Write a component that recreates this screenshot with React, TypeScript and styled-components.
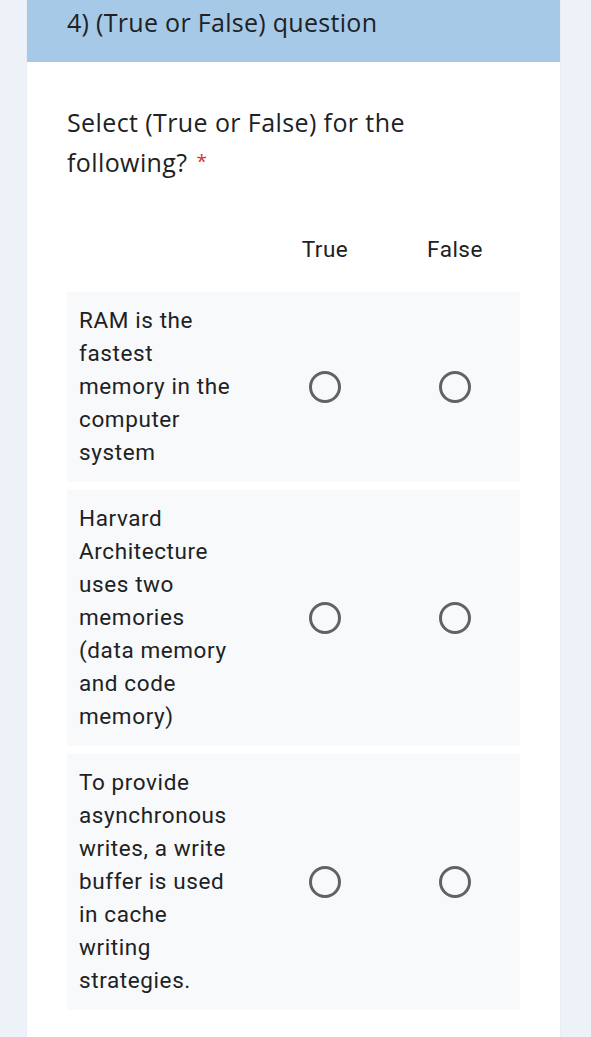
import * as React from 'react';
import styled, { createGlobalStyle } from 'styled-components';

const GlobalStyle = createGlobalStyle`
  html, body {
    margin: 0;
    padding: 0;
    background: #edf2f8;
  }
  body {
    font-family: Roboto, "Liberation Sans", sans-serif;
    color: #202124;
  }
`;

const Page = styled.div`
  padding: 0 31px 0 27px;
  height: 1037px;
  overflow: hidden;
`;

const Card = styled.div`
  background: #fff;
  min-height: 1100px;
  box-shadow: 0 0 1px rgba(0, 0, 0, 0.12);
`;

const Header = styled.div`
  height: 62px;
  background: #a6c9e7;
  padding: 0 40px;
  display: flex;
  align-items: flex-start;
`;

const HeaderTitle = styled.div`
  font-family: "Open Sans", Roboto, sans-serif;
  font-size: 25px;
  letter-spacing: 0.3px;
  line-height: 44px;
  color: #202124;
`;

const Body = styled.div`
  padding: 40px 40px 0 40px;
`;

const Question = styled.div`
  font-family: "Open Sans", Roboto, sans-serif;
  font-size: 25px;
  letter-spacing: 0.4px;
  line-height: 40px;
  width: 380px;
  color: #202124;
`;

const Required = styled.span`
  display: inline-block;
  color: #d93025;
  font-size: 19px;
  line-height: 1;
  margin-left: 9px;
  vertical-align: 4px;
`;

const Grid = styled.div`
  margin-top: 52px;
  width: 453px;
`;

const HeadRow = styled.div`
  display: grid;
  grid-template-columns: 193px 130px 130px;
  height: 58px;
  align-items: start;
`;

const ColLabel = styled.div`
  font-size: 22.5px;
  letter-spacing: 0.5px;
  line-height: 30px;
  text-align: center;
  color: #202124;
`;

const Row = styled.div`
  display: grid;
  grid-template-columns: 193px 130px 130px;
  align-items: center;
  background: #f8f9fa;
  padding: 12px 0 13px;
  margin-bottom: 8px;
`;

const RowLabel = styled.div`
  padding-left: 12px;
  width: 158px;
  font-size: 22.5px;
  letter-spacing: 0.6px;
  line-height: 33px;
  color: #202124;
`;

const RadioCell = styled.div`
  display: flex;
  justify-content: center;
`;

const Radio = styled.span`
  width: 26px;
  height: 26px;
  border: 3px solid #5f6368;
  border-radius: 50%;
`;

const rows = [
  'RAM is the fastest memory in the computer system',
  'Harvard Architecture uses two memories (data memory and code memory)',
  'To provide asynchronous writes, a write buffer is used in cache writing strategies.',
];

export default function App() {
  return (
    <Page>
      <GlobalStyle />
      <Card>
        <Header>
          <HeaderTitle>4) (True or False) question</HeaderTitle>
        </Header>
        <Body>
          <Question>
            Select (True or False) for the following?<Required>*</Required>
          </Question>
          <Grid>
            <HeadRow>
              <div />
              <ColLabel>True</ColLabel>
              <ColLabel>False</ColLabel>
            </HeadRow>
            {rows.map((text) => (
              <Row key={text}>
                <RowLabel>{text}</RowLabel>
                <RadioCell>
                  <Radio />
                </RadioCell>
                <RadioCell>
                  <Radio />
                </RadioCell>
              </Row>
            ))}
          </Grid>
        </Body>
      </Card>
    </Page>
  );
}
